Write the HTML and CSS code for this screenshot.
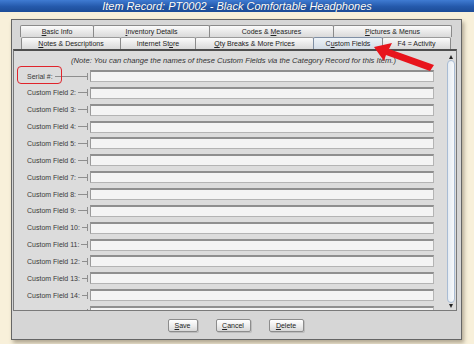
FILE: index.html
```html
<!DOCTYPE html>
<html>
<head>
<meta charset="utf-8">
<title>Item Record</title>
<link rel="stylesheet" href="styles.css">
</head>
<body>
<div class="title">Item Record: PT0002 - Black Comfortable Headphones</div>
<div class="window">
  <div class="tabs">
    <div class="tabrow row1">
      <div class="tab w-basic"><u>B</u>asic Info</div>
      <div class="tab w-inv"><u>I</u>nventory Details</div>
      <div class="tab w-codes">Codes &amp; <u>M</u>easures</div>
      <div class="tab w-pics"><u>P</u>ictures &amp; Menus</div>
    </div>
    <div class="tabrow row2">
      <div class="tab w-notes"><u>N</u>otes &amp; Descriptions</div>
      <div class="tab w-inet">Internet St<u>o</u>re</div>
      <div class="tab w-qty"><u>Q</u>ty Breaks &amp; More Prices</div>
      <div class="tab w-custom selected">C<u>u</u>stom Fields</div>
      <div class="tab w-f4">F4 = Activity</div>
    </div>
  </div>
  <div class="panel">
    <div class="content">
      <div class="note">(Note: You can change the names of these Custom Fields via the Category Record for this Item.)</div>
      <div class="rows">
        <div class="row"><div class="label"><span>Serial #:</span><i class="line"></i><i class="tick"></i></div><div class="input"></div></div>
        <div class="row"><div class="label"><span>Custom Field 2:</span><i class="line"></i><i class="tick"></i></div><div class="input"></div></div>
        <div class="row"><div class="label"><span>Custom Field 3:</span><i class="line"></i><i class="tick"></i></div><div class="input"></div></div>
        <div class="row"><div class="label"><span>Custom Field 4:</span><i class="line"></i><i class="tick"></i></div><div class="input"></div></div>
        <div class="row"><div class="label"><span>Custom Field 5:</span><i class="line"></i><i class="tick"></i></div><div class="input"></div></div>
        <div class="row"><div class="label"><span>Custom Field 6:</span><i class="line"></i><i class="tick"></i></div><div class="input"></div></div>
        <div class="row"><div class="label"><span>Custom Field 7:</span><i class="line"></i><i class="tick"></i></div><div class="input"></div></div>
        <div class="row"><div class="label"><span>Custom Field 8:</span><i class="line"></i><i class="tick"></i></div><div class="input"></div></div>
        <div class="row"><div class="label"><span>Custom Field 9:</span><i class="line"></i><i class="tick"></i></div><div class="input"></div></div>
        <div class="row"><div class="label"><span>Custom Field 10:</span><i class="line"></i><i class="tick"></i></div><div class="input"></div></div>
        <div class="row"><div class="label"><span>Custom Field 11:</span><i class="line"></i><i class="tick"></i></div><div class="input"></div></div>
        <div class="row"><div class="label"><span>Custom Field 12:</span><i class="line"></i><i class="tick"></i></div><div class="input"></div></div>
        <div class="row"><div class="label"><span>Custom Field 13:</span><i class="line"></i><i class="tick"></i></div><div class="input"></div></div>
        <div class="row"><div class="label"><span>Custom Field 14:</span><i class="line"></i><i class="tick"></i></div><div class="input"></div></div>
        <div class="row"><div class="label"><span>Custom Field 15:</span><i class="line"></i><i class="tick"></i></div><div class="input"></div></div>
      </div>
    </div>
    <div class="scrollbar">
      <div class="arrow-up"></div>
      <div class="track"></div>
      <div class="arrow-down"></div>
    </div>
  </div>
  <div class="buttons">
    <button class="btn b-save"><u>S</u>ave</button>
    <button class="btn b-cancel"><u>C</u>ancel</button>
    <button class="btn b-delete"><u>D</u>elete</button>
  </div>
</div>
<div class="callout"></div>
<svg class="pointer" width="70" height="34" viewBox="0 0 70 34">
  <polygon points="0,4 18,0 15,6 60,22 56,28 12,12 10,18" fill="#e8141c"/>
</svg>
</body>
</html>
```

FILE: styles.css
```css
* { box-sizing: border-box; }
html, body { margin: 0; padding: 0; }
body {
  width: 474px;
  height: 344px;
  overflow: hidden;
  background: #f8f0da;
  font-family: "Liberation Sans", Arial, sans-serif;
  font-size: 7px;
  color: #2a2a2a;
  position: relative;
}
u { text-decoration: underline; text-underline-offset: 1px; }

.title {
  height: 12px;
  line-height: 12px;
  text-align: center;
  color: #fff;
  font-style: italic;
  font-size: 11px;
  background: linear-gradient(#3f7bd2, #2459ab 55%, #1d4c96);
  text-shadow: 0 0 1px rgba(0,0,0,.4);
}

.window {
  margin: 7px 0 0 11px;
  width: 451px;
  height: 321px;
  border: 1px solid #666;
  background: #d6d6d6;
  box-shadow: 2px 3px 4px rgba(90,80,60,.45);
  padding: 5px 4px 0 1px;
  display: flex;
  flex-direction: column;
}

.tabs { height: 24px; position: relative; }
.tabrow { display: flex; height: 12px; }
.row1 { padding-left: 7px; }
.row2 { padding-left: 8px; }
.tab {
  height: 12px;
  line-height: 11px;
  text-align: center;
  border: 1px solid #8a8a8a;
  border-bottom: none;
  margin-right: -1px;
  border-radius: 2px 2px 0 0;
  background: linear-gradient(#fbfbfb, #e6e6e6 60%, #dadada);
  color: #222;
  white-space: nowrap;
}
.row2 .tab { border-top-color: #9a9a9a; }
.tab.selected {
  background: linear-gradient(#eef3f8, #d2dbe5);
  border-color: #7f8fa4;
}
.w-basic { width: 74px; }
.w-inv { width: 117px; }
.w-codes { width: 125px; }
.w-pics { width: 119px; }
.w-notes { width: 100px; }
.w-inet { width: 76px; }
.w-qty { width: 119px; }
.w-custom { width: 70px; }
.w-f4 { width: 69px; }

.panel {
  height: 262px;
  border: 1px solid #7a7a7a;
  border-top: 2px solid #4e4e4e;
  background: #dcdcdc;
  display: flex;
  overflow: hidden;
}
.content {
  flex: 1;
  padding: 5px 11px 0 13px;
  overflow: hidden;
}
.note {
  height: 14px;
  line-height: 9px;
  font-style: italic;
  font-size: 7.6px;
  text-align: center;
  padding-left: 6px;
  color: #333;
  white-space: nowrap;
}
.rows {
  display: flex;
  flex-direction: column;
  gap: 4.86px;
}
.row {
  display: flex;
  height: 12px;
  align-items: center;
}
.label {
  width: 61px;
  display: flex;
  align-items: center;
  white-space: nowrap;
  color: #3a3a3a;
}
.label span { padding-right: 2px; }
.line {
  flex: 1;
  height: 1px;
  background: #8e8e8e;
  min-width: 3px;
}
.tick {
  width: 1px;
  height: 7px;
  background: #8e8e8e;
}
.input {
  flex: 1;
  height: 12px;
  margin-left: 2px;
  background: #f4f4f4;
  border: 1px solid #b4b4b4;
  border-top: 2px solid #8f8f8f;
  border-left-color: #9a9a9a;
}

.scrollbar {
  width: 11px;
  margin: 2px 0 1px 0;
  padding: 0 1px 0 1px;
  display: flex;
  flex-direction: column;
  align-items: center;
}
.track {
  flex: 1;
  width: 8px;
  border: 1px solid #a9bcd4;
  border-radius: 4px;
  background: linear-gradient(90deg, #e6ecf3, #f7f9fb);
  margin: 1px 0;
}
.arrow-up, .arrow-down {
  width: 0; height: 0;
  border-left: 2.5px solid transparent;
  border-right: 2.5px solid transparent;
}
.arrow-up { border-bottom: 4px solid #222; margin-top: 2px; }
.arrow-down { border-top: 4px solid #222; margin-bottom: 1px; }

.buttons {
  flex: 1;
  display: flex;
  justify-content: center;
  gap: 18px;
  padding-top: 8px;
  padding-left: 1px;
}
.btn {
  height: 13px;
  padding: 0;
  font-family: "Liberation Sans", Arial, sans-serif;
  font-size: 7px;
  color: #222;
  border: 1px solid #8c8c8c;
  border-radius: 2px;
  background: linear-gradient(#ffffff, #ececec 55%, #d8d8d8);
  box-shadow: 1px 1px 0 rgba(0,0,0,.12);
}
.b-save { width: 30px; }
.b-cancel { width: 35px; }
.b-delete { width: 35px; }

.callout {
  position: absolute;
  left: 17px;
  top: 66px;
  width: 45px;
  height: 18px;
  border: 1.5px solid #e0242c;
  border-radius: 4px;
}
.pointer {
  position: absolute;
  left: 374px;
  top: 43px;
}
```
